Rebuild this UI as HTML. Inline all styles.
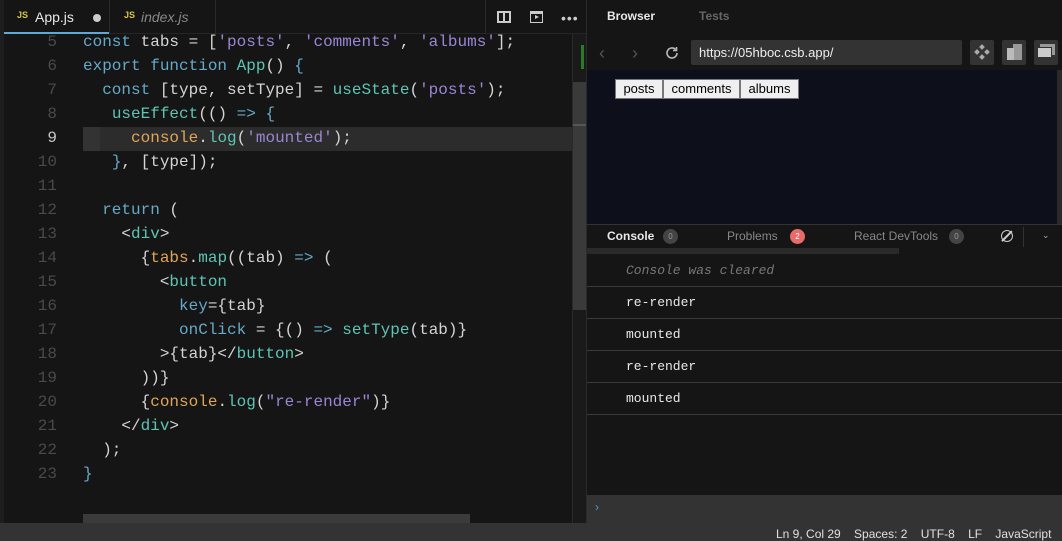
<!DOCTYPE html>
<html><head><meta charset="utf-8"><style>
*{margin:0;padding:0;box-sizing:border-box}
body{width:1062px;height:541px;overflow:hidden;background:#151515;font-family:"Liberation Sans",sans-serif;position:relative}
.a{position:absolute}
.code{font-family:"Liberation Mono",monospace;font-size:16px;line-height:24px;white-space:pre;color:#d4d4d4}
.ln{position:absolute;left:0;width:57px;text-align:right;color:#4a4a4a}
.ln.cur{color:#c8c8c8}
.cl{position:absolute;left:83px}
.k{color:#66a9c9}.f{color:#5ec4b6}.s{color:#9b85d4}.o{color:#e0a458}.t{color:#5ec4b6}.p{color:#66a9c9}
.mono{font-family:"Liberation Mono",monospace}
.row{position:absolute;left:587px;right:0;height:32px;border-bottom:1px solid #3a3a3a;font-family:"Liberation Mono",monospace;font-size:13px;color:#e8e8e8;padding-left:39px;line-height:31px}
.badge{position:absolute;width:15px;height:15px;border-radius:50%;background:#444;color:#999;font-size:8px;text-align:center;line-height:15px}
.btn{position:absolute;top:79px;height:20px;background:#efefef;border:1px solid #777;font-size:13px;color:#000;line-height:18px;text-align:center}
.ib{position:absolute;top:40px;width:24px;height:25px;background:#333;border-radius:2px}
</style></head><body>
<!-- editor -->
<div class="a" style="left:0;top:0;width:4px;height:523px;background:#1e1e1e"></div>
<div class="a" style="left:4px;top:0;width:582px;height:34px;background:#151515;border-bottom:1px solid #252525"></div>
<div class="a" style="left:4px;top:0;width:105px;height:34px;border-bottom:2px solid #5fa8d8"></div>
<div class="a" style="left:17px;top:10px;font-size:9px;font-weight:bold;color:#d6c545">JS</div>
<div class="a" style="left:35px;top:9px;font-size:14px;color:#e8e8e8">App.js</div>
<div class="a" style="left:93px;top:14px;width:8px;height:8px;border-radius:50%;background:#ccc"></div>
<div class="a" style="left:109px;top:0;width:1px;height:34px;background:#2a2a2a"></div>
<div class="a" style="left:124px;top:10px;font-size:9px;font-weight:bold;color:#d6c545">JS</div>
<div class="a" style="left:141px;top:9px;font-size:14px;color:#888;font-style:italic">index.js</div>
<div class="a" style="left:215px;top:0;width:1px;height:34px;background:#2a2a2a"></div>
<div class="a" style="left:485px;top:0;width:1px;height:34px;background:#2a2a2a"></div>
<div class="a" style="left:497px;top:11px;width:14px;height:12px;border:2px solid #ccc"></div>
<div class="a" style="left:503px;top:11px;width:2px;height:12px;background:#ccc"></div>
<div class="a" style="left:530px;top:11px;width:13px;height:12px;border:1.5px solid #ccc;border-top-width:3px"></div>
<div class="a" style="left:535px;top:15px;width:0;height:0;border-left:4px solid #ccc;border-top:2.5px solid transparent;border-bottom:2.5px solid transparent"></div>
<div class="a" style="left:561px;top:10px;color:#ccc;font-size:14px;letter-spacing:1px">•••</div>

<div class="a" style="left:83px;top:127px;width:489px;height:24px;background:#2c2c2c"></div>
<div class="a" style="left:83px;top:127px;width:17px;height:24px;background:#333"></div>
<div class="a" style="left:572px;top:34px;width:14px;height:489px;background:#1a1a1a;border-left:1px solid #2a2a2a"></div>
<div class="a" style="left:573px;top:82px;width:13px;height:228px;background:#3a3a3a"></div>
<div class="a" style="left:581px;top:45px;width:3px;height:24px;background:#2a7a2a"></div>
<div class="a" style="left:573px;top:124px;width:13px;height:2px;background:#555"></div>
<div class="a" style="left:83px;top:514px;width:387px;height:9px;background:#3b3b3b"></div>

<div class="a code" style="left:0;top:30px;width:572px">
<div class="ln" style="top:0">5</div><div class="cl" style="top:0"><span class="k">const</span> tabs = [<span class="s">'posts'</span>, <span class="s">'comments'</span>, <span class="s">'albums'</span>];</div>
<div class="ln" style="top:24px">6</div><div class="cl" style="top:24px"><span class="k">export</span> <span class="k">function</span> <span class="f">App</span>() <span class="k">{</span></div>
<div class="ln" style="top:48px">7</div><div class="cl" style="top:48px">  <span class="k">const</span> [type, setType] = <span class="f">useState</span>(<span class="s">'posts'</span>);</div>
<div class="ln" style="top:72px">8</div><div class="cl" style="top:72px">   <span class="f">useEffect</span>(() <span class="k">=&gt;</span> <span class="k">{</span></div>
<div class="ln cur" style="top:96px">9</div><div class="cl" style="top:96px">     <span class="o">console</span>.<span class="f">log</span>(<span class="s">'mounted'</span>);</div>
<div class="ln" style="top:120px">10</div><div class="cl" style="top:120px">   <span class="k">}</span>, [type]);</div>
<div class="ln" style="top:144px">11</div>
<div class="ln" style="top:168px">12</div><div class="cl" style="top:168px">  <span class="k">return</span> (</div>
<div class="ln" style="top:192px">13</div><div class="cl" style="top:192px">    &lt;<span class="t">div</span>&gt;</div>
<div class="ln" style="top:216px">14</div><div class="cl" style="top:216px">      {<span class="o">tabs</span>.<span class="f">map</span>((tab) <span class="k">=&gt;</span> (</div>
<div class="ln" style="top:240px">15</div><div class="cl" style="top:240px">        &lt;<span class="t">button</span></div>
<div class="ln" style="top:264px">16</div><div class="cl" style="top:264px">          <span class="p">key</span>={tab}</div>
<div class="ln" style="top:288px">17</div><div class="cl" style="top:288px">          <span class="p">onClick</span> = {() <span class="k">=&gt;</span> <span class="f">setType</span>(tab)}</div>
<div class="ln" style="top:312px">18</div><div class="cl" style="top:312px">        &gt;{tab}&lt;/<span class="t">button</span>&gt;</div>
<div class="ln" style="top:336px">19</div><div class="cl" style="top:336px">      ))}</div>
<div class="ln" style="top:360px">20</div><div class="cl" style="top:360px">      {<span class="o">console</span>.<span class="f">log</span>(<span class="s">"re-render"</span>)}</div>
<div class="ln" style="top:384px">21</div><div class="cl" style="top:384px">    &lt;/<span class="t">div</span>&gt;</div>
<div class="ln" style="top:408px">22</div><div class="cl" style="top:408px">  );</div>
<div class="ln" style="top:432px">23</div><div class="cl" style="top:432px"><span class="k">}</span></div>
</div>

<!-- right panel -->
<div class="a" style="left:586px;top:0;width:1px;height:523px;background:#2a2a2a"></div>
<div class="a" style="left:607px;top:9px;font-size:12px;font-weight:bold;color:#e8e8e8">Browser</div>
<div class="a" style="left:699px;top:9px;font-size:12px;font-weight:bold;color:#666">Tests</div>
<div class="a" style="left:599px;top:43px;font-size:18px;color:#555">&#8249;</div>
<div class="a" style="left:632px;top:43px;font-size:18px;color:#555">&#8250;</div>
<svg class="a" style="left:663px;top:44px" width="18" height="18" viewBox="0 0 18 18"><path d="M14 9a5 5 0 1 1-1.5-3.6" fill="none" stroke="#bbb" stroke-width="1.6"/><path d="M13.5 3v3.5H10" fill="none" stroke="#bbb" stroke-width="1.6"/></svg>
<div class="a" style="left:691px;top:40px;width:271px;height:25px;background:#333;border-radius:2px;color:#eee;font-size:13px;line-height:25px;padding-left:8px">https://05hboc.csb.app/</div>
<div class="ib" style="left:970px"></div>
<svg class="a" style="left:973px;top:43px" width="18" height="18" viewBox="0 0 18 18" fill="#aaa"><rect x="7" y="2" width="4" height="4" transform="rotate(45 9 4)"/><rect x="2" y="7" width="4" height="4" transform="rotate(45 4 9)"/><rect x="12" y="7" width="4" height="4" transform="rotate(45 14 9)"/><rect x="7" y="12" width="4" height="4" transform="rotate(45 9 14)"/></svg>
<div class="ib" style="left:1002px"></div>
<div class="a" style="left:1013px;top:44px;width:9px;height:16px;background:#999"></div>
<div class="a" style="left:1007px;top:48px;width:7px;height:12px;background:#bbb"></div>
<div class="ib" style="left:1034px"></div>
<div class="a" style="left:1040px;top:44px;width:15px;height:11px;background:#999"></div>
<div class="a" style="left:1037px;top:47px;width:15px;height:11px;background:#ccc;border:1px solid #333"></div>

<div class="a" style="left:587px;top:70px;width:470px;height:154px;background:#0d0f1a"></div>
<div class="a" style="left:1057px;top:70px;width:5px;height:154px;background:#2a2a2a"></div>
<div class="btn" style="left:615px;width:48px">posts</div>
<div class="btn" style="left:663px;width:77px">comments</div>
<div class="btn" style="left:740px;width:59px">albums</div>

<div class="a" style="left:587px;top:224px;width:475px;height:1px;background:#333"></div>
<div class="a" style="left:607px;top:229px;font-size:12px;font-weight:bold;color:#e8e8e8">Console</div>
<div class="badge" style="left:663px;top:229px">0</div>
<div class="a" style="left:727px;top:229px;font-size:12px;color:#888">Problems</div>
<div class="badge" style="left:790px;top:229px;background:#e86a6a;color:#fff">2</div>
<div class="a" style="left:854px;top:229px;font-size:12px;color:#888">React DevTools</div>
<div class="badge" style="left:949px;top:229px">0</div>
<div class="a" style="left:1001px;top:230px;width:12px;height:12px;border:1.5px solid #ccc;border-radius:50%"></div>
<div class="a" style="left:1006px;top:229px;width:1.5px;height:14px;background:#ccc;transform:rotate(45deg)"></div>
<div class="a" style="left:1023px;top:227px;width:1px;height:20px;background:#333"></div>
<div class="a" style="left:1042px;top:230px;font-size:9px;color:#aaa">&#8964;</div>
<div class="a" style="left:587px;top:248px;width:312px;height:6px;background:#2a2a2a"></div>

<div class="row" style="top:254px;height:33px;line-height:33px;color:#777;font-style:italic">Console was cleared</div>
<div class="row" style="top:287px">re-render</div>
<div class="row" style="top:319px">mounted</div>
<div class="row" style="top:351px">re-render</div>
<div class="row" style="top:383px">mounted</div>

<div class="a" style="left:587px;top:495px;width:475px;height:28px;background:#333"></div>
<div class="a" style="left:595px;top:500px;font-size:12px;color:#4a9ad8">›</div>

<!-- status bar -->
<div class="a" style="left:0;top:523px;width:1062px;height:18px;background:#333"></div>
<div class="a" style="left:776px;top:527px;font-size:12px;color:#e0e0e0;white-space:pre">Ln 9, Col 29    Spaces: 2    UTF-8    LF    JavaScript</div>
</body></html>
